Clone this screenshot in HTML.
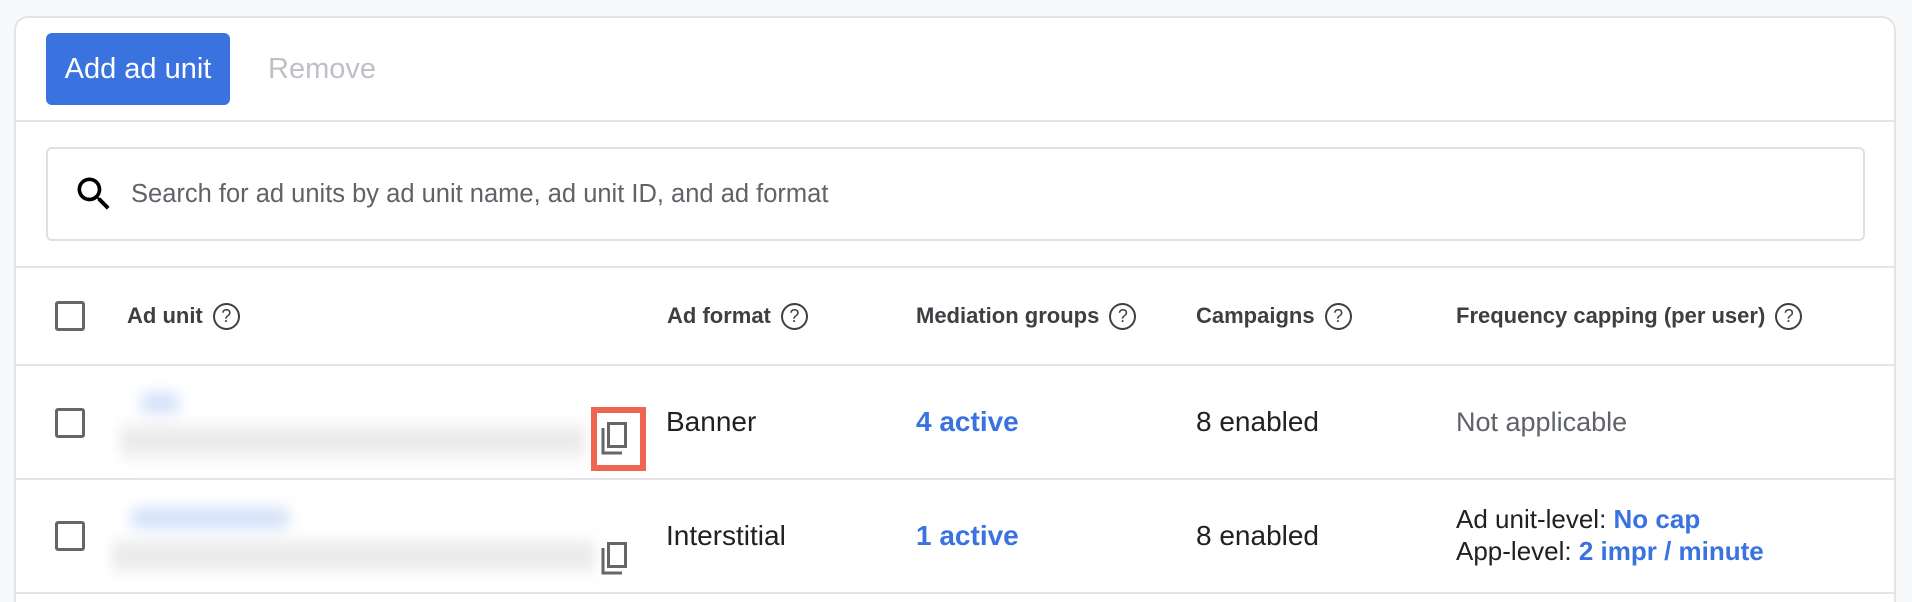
<!DOCTYPE html>
<html><head><style>
*{box-sizing:border-box;margin:0;padding:0}
html,body{width:1912px;height:602px;overflow:hidden}
body{background:#f8f9fa;font-family:"Liberation Sans",Arial,sans-serif;position:relative;color:#202124}
.card{position:absolute;left:14px;top:16px;width:1882px;height:586px;background:#fff;border:2px solid #e3e4e6;border-bottom:none;border-radius:14px 14px 0 0}
.a{position:absolute;white-space:nowrap}
.hr{position:absolute;left:14px;width:1882px;height:2px;background:#e3e4e6}
.btn{left:46px;top:33px;width:184px;height:72px;background:#3a73e0;border-radius:6px;color:#fff;font-size:29px;line-height:72px;text-align:center}
.cb{width:30px;height:30px;border:3px solid #666;border-radius:3px;left:55px}
.h{font-size:22px;font-weight:bold;color:#3c4043;top:300px;height:32px;display:flex;align-items:center;gap:10px}
.q{width:27px;height:27px;border:2px solid #3c4043;border-radius:50%;font-size:18px;line-height:23px;text-align:center;font-weight:normal}
.t{font-size:28px}
.blue{color:#3a73e0;font-weight:bold}
.blur{background:linear-gradient(#fff 0 45%,#eee 60%,#e8e8e8 75%,#fff 100%);filter:blur(6px)}
</style></head><body>
<div class="card"></div>
<div class="a btn">Add ad unit</div>
<div class="a" style="left:268px;top:33px;line-height:72px;font-size:29px;color:#bdc1c6">Remove</div>
<div class="hr" style="top:120px"></div>
<div class="a" style="left:46px;top:147px;width:1819px;height:94px;border:2px solid #e0e0e0;border-radius:6px"></div>
<svg class="a" style="left:72px;top:172px" width="44" height="44" viewBox="0 0 24 24"><path d="M15.5 14h-.79l-.28-.27A6.47 6.47 0 0 0 16 9.5 6.5 6.5 0 1 0 9.5 16c1.61 0 3.09-.59 4.23-1.57l.27.28v.79l5 4.99L20.49 19l-4.99-5zm-6 0C7.01 14 5 11.99 5 9.5S7.01 5 9.5 5 14 7.01 14 9.5 11.99 14 9.5 14z"/></svg>
<div class="a" style="left:131px;top:179px;font-size:25.5px;color:#5f6368;line-height:30px">Search for ad units by ad unit name, ad unit ID, and ad format</div>
<div class="hr" style="top:266px"></div>
<div class="a cb" style="top:301px"></div>
<div class="a h" style="left:127px">Ad unit <span class="q">?</span></div>
<div class="a h" style="left:667px">Ad format <span class="q">?</span></div>
<div class="a h" style="left:916px">Mediation groups <span class="q">?</span></div>
<div class="a h" style="left:1196px">Campaigns <span class="q">?</span></div>
<div class="a h" style="left:1456px">Frequency capping (per user) <span class="q">?</span></div>
<div class="hr" style="top:364px"></div>
<div class="a cb" style="top:408px"></div>
<div class="a blur" style="left:120px;top:380px;width:465px;height:85px"></div>
<div class="a" style="left:140px;top:392px;width:40px;height:22px;background:#d6e2fa;filter:blur(7px);border-radius:10px"></div>
<div class="a" style="left:591px;top:407px;width:55px;height:64px;background:#ee6552"></div>
<div class="a" style="left:597px;top:413px;width:43px;height:52px;background:#fff"></div>
<svg class="a" style="left:600px;top:420px" width="30" height="36" viewBox="0 0 30 36"><path d="M3 8v25h19" fill="none" stroke="#666" stroke-width="3"/><rect x="8.5" y="3.5" width="17" height="23" fill="none" stroke="#666" stroke-width="3"/></svg>
<div class="a t" style="left:666px;top:406px">Banner</div>
<div class="a t blue" style="left:916px;top:406px">4 active</div>
<div class="a t" style="left:1196px;top:406px">8 enabled</div>
<div class="a" style="left:1456px;top:407px;font-size:27px;color:#5f6368">Not applicable</div>
<div class="hr" style="top:478px"></div>
<div class="a cb" style="top:521px"></div>
<div class="a blur" style="left:112px;top:495px;width:483px;height:85px"></div>
<div class="a" style="left:130px;top:507px;width:160px;height:22px;background:#d6e2fa;filter:blur(7px);border-radius:10px"></div>
<svg class="a" style="left:600px;top:540px" width="30" height="36" viewBox="0 0 30 36"><path d="M3 8v25h19" fill="none" stroke="#666" stroke-width="3"/><rect x="8.5" y="3.5" width="17" height="23" fill="none" stroke="#666" stroke-width="3"/></svg>
<div class="a t" style="left:666px;top:520px">Interstitial</div>
<div class="a t blue" style="left:916px;top:520px">1 active</div>
<div class="a t" style="left:1196px;top:520px">8 enabled</div>
<div class="a" style="left:1456px;top:503px;font-size:26px;line-height:32px">Ad unit-level: <span class="blue">No cap</span><br>App-level: <span class="blue">2 impr / minute</span></div>
<div class="hr" style="top:592px"></div>
</body></html>
